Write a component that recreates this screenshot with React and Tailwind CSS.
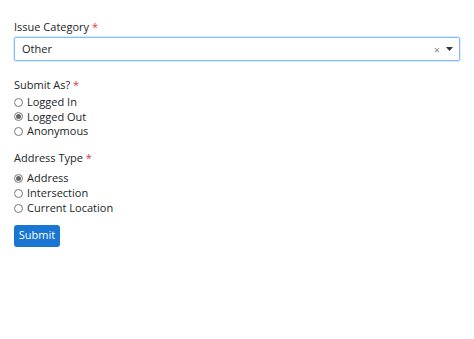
import React, { useState } from 'react';

const Radio = ({ name, label, checked, onChange, rowClass = 'h-[14.5px]' }) => (
  <label className={`flex items-center gap-[4px] ${rowClass} text-[11px] text-[#212529]`}>
    <span className="w-[9px] h-[9px] rounded-full border border-[#777] flex items-center justify-center bg-white">
      {checked && <span className="w-[5px] h-[5px] rounded-full bg-[#666]" />}
    </span>
    <input type="radio" name={name} className="hidden" checked={checked} onChange={onChange} />
    {label}
  </label>
);

const Required = ({ children }) => (
  <div className="text-[11px] text-[#212529] leading-none">
    {children} <span className="text-[#dc3545]">*</span>
  </div>
);

export default function App() {
  const [submitAs, setSubmitAs] = useState('Logged Out');
  const [addrType, setAddrType] = useState('Address');

  return (
    <div className="w-[474px] h-[339px] bg-white px-[14px] pt-[21px]" style={{ fontFamily: '"Open Sans", "Noto Sans", sans-serif' }}>
      {/* Issue Category */}
      <Required>Issue Category</Required>
      <div className="mt-[5px] w-[446px] h-[24px] border border-[#80bdff] rounded-[2px] shadow-[0_0_0_1px_rgba(0,123,255,0.15)] flex items-center pl-[7px] pr-[6px]">
        <span className="flex-1 text-[11px] text-[#212529]">Other</span>
        <span className="text-[11px] text-[#888] mr-[6px] leading-none">×</span>
        <svg width="7" height="4" viewBox="0 0 7 4"><path d="M0 0h7L3.5 4z" fill="#333" /></svg>
      </div>

      {/* Submit As */}
      <div className="mt-[18px]">
        <Required>Submit As?</Required>
        <div className="mt-[5px] flex flex-col">
          {['Logged In', 'Logged Out', 'Anonymous'].map(o => (
            <Radio key={o} name="submitAs" label={o} checked={submitAs === o} onChange={() => setSubmitAs(o)} />
          ))}
        </div>
      </div>

      {/* Address Type */}
      <div className="mt-[13px]">
        <Required>Address Type</Required>
        <div className="mt-[8px] flex flex-col">
          {['Address', 'Intersection', 'Current Location'].map(o => (
            <Radio key={o} name="addrType" label={o} rowClass="h-[15px]" checked={addrType === o} onChange={() => setAddrType(o)} />
          ))}
        </div>
      </div>

      <button className="mt-[9px] h-[22px] w-[46px] rounded-[3px] bg-[#1976d2] text-white text-[11px]">Submit</button>
    </div>
  );
}
